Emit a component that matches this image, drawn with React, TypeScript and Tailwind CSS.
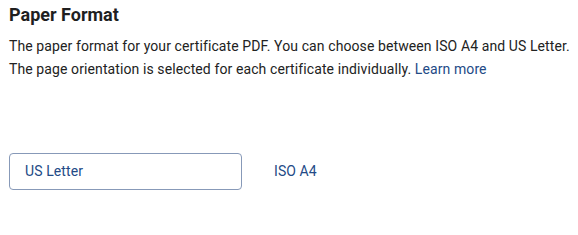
export default function App() {
  return (
    <div className="w-[578px] h-[235px] bg-white px-[9px] pt-[4px]" style={{ fontFamily: "Roboto, sans-serif" }}>
      <h2 className="text-[18px] font-bold text-[#1f1f1f] leading-[22px]">Paper Format</h2>
      <p className="mt-[9px] whitespace-nowrap text-[14px] leading-[23px] tracking-[0.1px] text-[#222]">
        The paper format for your certificate PDF. You can choose between ISO A4 and US Letter.
        <br />
        The page orientation is selected for each certificate individually.{" "}
        <a className="text-[#234a86]">Learn more</a>
      </p>
      <div className="mt-[72px] flex items-center">
        <button className="w-[233px] h-[37px] rounded-[4px] border border-[#8799b8] text-left pl-[15px] text-[14px] tracking-[0.1px] text-[#234a86]">
          US Letter
        </button>
        <button className="ml-[32px] text-[14px] tracking-[0.1px] text-[#234a86]">ISO A4</button>
      </div>
    </div>
  );
}
